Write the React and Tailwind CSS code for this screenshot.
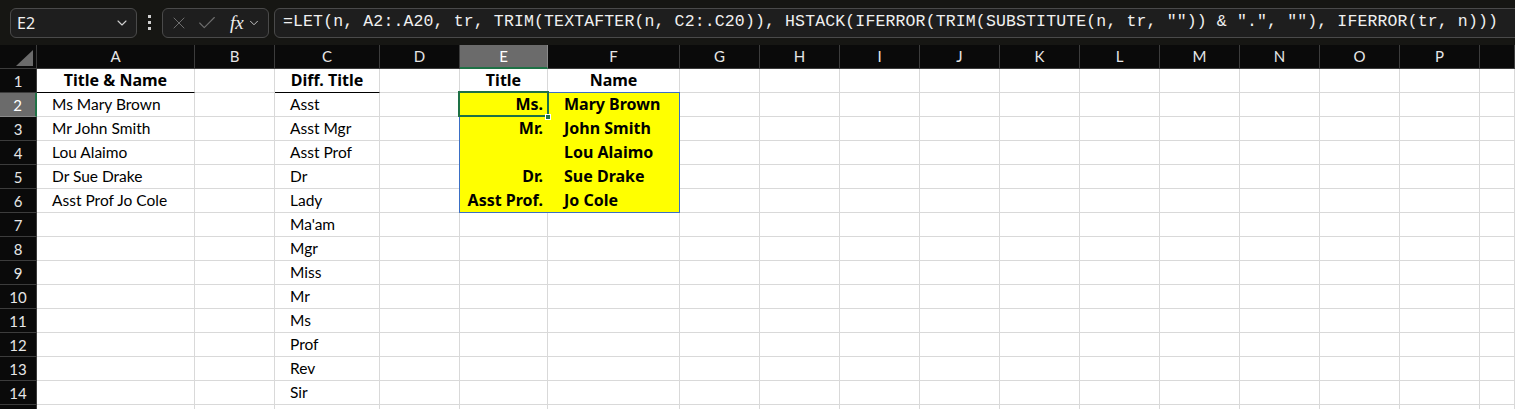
import React from 'react';
import { X, Check, ChevronDown } from 'lucide-react';

const cols = ['A', 'B', 'C', 'D', 'E', 'F', 'G', 'H', 'I', 'J', 'K', 'L', 'M', 'N', 'O', 'P', ''];

const colA = ['Title & Name', 'Ms Mary Brown', 'Mr John Smith', 'Lou Alaimo', 'Dr Sue Drake', 'Asst Prof Jo Cole'];
const colC = ['Diff. Title', 'Asst', 'Asst Mgr', 'Asst Prof', 'Dr', 'Lady', "Ma'am", 'Mgr', 'Miss', 'Mr', 'Ms', 'Prof', 'Rev', 'Sir'];
const colE = ['Title', 'Ms.', 'Mr.', '', 'Dr.', 'Asst Prof.'];
const colF = ['Name', 'Mary Brown', 'John Smith', 'Lou Alaimo', 'Sue Drake', 'Jo Cole'];

const formula =
  '=LET(n, A2:.A20, tr, TRIM(TEXTAFTER(n, C2:.C20)), HSTACK(IFERROR(TRIM(SUBSTITUTE(n, tr, "")) & ".", ""), IFERROR(tr, n)))';

const boldFont = { fontFamily: '"Noto Sans", Lato, sans-serif' };

const Toolbar = () => (
  <div className="flex items-center h-[45px] bg-[#161613] pl-[10px] overflow-hidden">
    <div className="shrink-0 flex items-center justify-between w-[127px] h-[30px] rounded-[6px] border border-[#4a4a4a] bg-[#1e1e1e] pl-[6px] pr-[6px] text-[#f2f2f2] text-[16px]" style={{ fontFamily: '"Noto Sans", sans-serif' }}>
      <span>E2</span>
      <ChevronDown size={16} strokeWidth={1.6} className="text-[#d0d0d0]" />
    </div>
    <div className="shrink-0 flex flex-col gap-[3px] w-[25px] items-center">
      <span className="w-[3px] h-[3px] bg-[#cfcfcf]"></span>
      <span className="w-[3px] h-[3px] bg-[#cfcfcf]"></span>
      <span className="w-[3px] h-[3px] bg-[#cfcfcf]"></span>
    </div>
    <div className="shrink-0 flex items-center w-[107px] h-[30px] rounded-[6px] border border-[#4a4a4a] bg-[#1e1e1e] pl-[6px] gap-[7px]">
      <X size={20} strokeWidth={1.2} className="text-[#6e6e6e]" />
      <Check size={22} strokeWidth={1.2} className="text-[#6e6e6e]" />
      <span className="text-[#ededed] text-[19px] italic leading-none ml-[5px]" style={{ fontFamily: '"Liberation Serif", serif' }}>fx</span>
      <ChevronDown size={14} strokeWidth={1.6} className="text-[#cfcfcf] -ml-[4px]" />
    </div>
    <div className="shrink-0 ml-[5px] flex items-center h-[30px] w-[1300px] rounded-l-[6px] border border-[#4a4a4a] bg-[#1e1e1e] pl-[8px] text-[#f0f0f0] text-[16.5px] tracking-[0.14px] whitespace-pre" style={{ fontFamily: '"Liberation Mono", monospace' }}>
      {formula}
    </div>
  </div>
);

const Cell = ({ row, col }) => {
  const base = 'h-[24px] border-r border-b flex items-end pb-0 text-[15.5px] text-black whitespace-nowrap overflow-visible';
  const bold = 'font-bold text-[16px]';
  if (col === 0) {
    if (row === 0) return <div className={`${base} ${bold} border-b-black justify-center border-r-[#d9d9d9]`} style={boldFont}>{colA[0]}</div>;
    return <div className={`${base} border-[#d9d9d9] pl-[15px]`}>{colA[row] || ''}</div>;
  }
  if (col === 2) {
    if (row === 0) return <div className={`${base} ${bold} border-b-black justify-center border-r-[#d9d9d9]`} style={boldFont}>{colC[0]}</div>;
    return <div className={`${base} border-[#d9d9d9] pl-[15px]`}>{colC[row] || ''}</div>;
  }
  if (col === 4) {
    if (row === 0) return <div className={`${base} ${bold} border-[#d9d9d9] justify-center`} style={boldFont}>{colE[0]}</div>;
    if (row <= 5) return <div className={`${base} ${bold} border-[#ffff00] bg-[#ffff00] justify-end pr-[4px]`} style={boldFont}>{colE[row]}</div>;
  }
  if (col === 5) {
    if (row === 0) return <div className={`${base} ${bold} border-[#d9d9d9] justify-center`} style={boldFont}>{colF[0]}</div>;
    if (row <= 5) return <div className={`${base} ${bold} border-[#ffff00] bg-[#ffff00] pl-[16px]`} style={boldFont}>{colF[row]}</div>;
  }
  return <div className={`${base} border-[#d9d9d9]`}></div>;
};

const Sheet = () => {
  const rows = Array.from({ length: 15 }, (_, i) => i);
  return (
    <div className="relative grid grid-cols-[37px_158px_80px_105px_80px_88px_132px_repeat(10,80px)_1fr] bg-white" style={{ fontFamily: 'Lato, "Noto Sans", sans-serif' }}>
      {/* header row */}
      <div className="h-[24px] bg-[#0a0a0a] border-r border-b border-[#3c3c3c] flex items-end justify-end pr-[3px] pb-[2px]">
        <svg width="17" height="16" viewBox="0 0 17 16">
          <polygon points="17,0 17,16 0,16" fill="#6b6b6b" />
        </svg>
      </div>
      {cols.map((c) => (
        <div
          key={c || 'q'}
          className={`h-[24px] border-r flex items-center justify-center text-[15px] ${
            c === 'E'
              ? 'bg-[#6b6b6b] border-b-2 border-b-[#1e7145] border-r-[#8a8a8a] text-white'
              : 'bg-[#0a0a0a] border-b border-[#3c3c3c] text-[#e6e6e6]'
          }`}
        >
          {c}
        </div>
      ))}
      {rows.map((r) => (
        <React.Fragment key={r}>
          <div
            className={`h-[24px] border-b flex items-center justify-center pt-[1px] text-[15px] ${
              r === 1
                ? 'bg-[#6b6b6b] border-r-2 border-r-[#1e7145] border-b-[#8a8a8a] text-white'
                : 'bg-[#0a0a0a] border-r border-[#3c3c3c] text-[#e6e6e6]'
            }`}
          >
            {r < 14 ? r + 1 : ''}
          </div>
          {cols.map((c, ci) => (
            <Cell key={ci} row={r} col={ci} />
          ))}
        </React.Fragment>
      ))}
      {/* spill range outline */}
      <div className="absolute left-[459px] top-[47px] w-[221px] h-[121px] border border-[#3b6fc4] pointer-events-none"></div>
      {/* active cell */}
      <div className="absolute left-[458px] top-[46px] w-[91px] h-[26px] border-2 border-[#1e7145] pointer-events-none"></div>
      <div className="absolute left-[545px] top-[69px] w-[6px] h-[6px] bg-[#1e7145] border border-white pointer-events-none"></div>
    </div>
  );
};

export default function App() {
  return (
    <div className="w-[1515px] h-[409px] overflow-hidden bg-white">
      <Toolbar />
      <Sheet />
    </div>
  );
}
